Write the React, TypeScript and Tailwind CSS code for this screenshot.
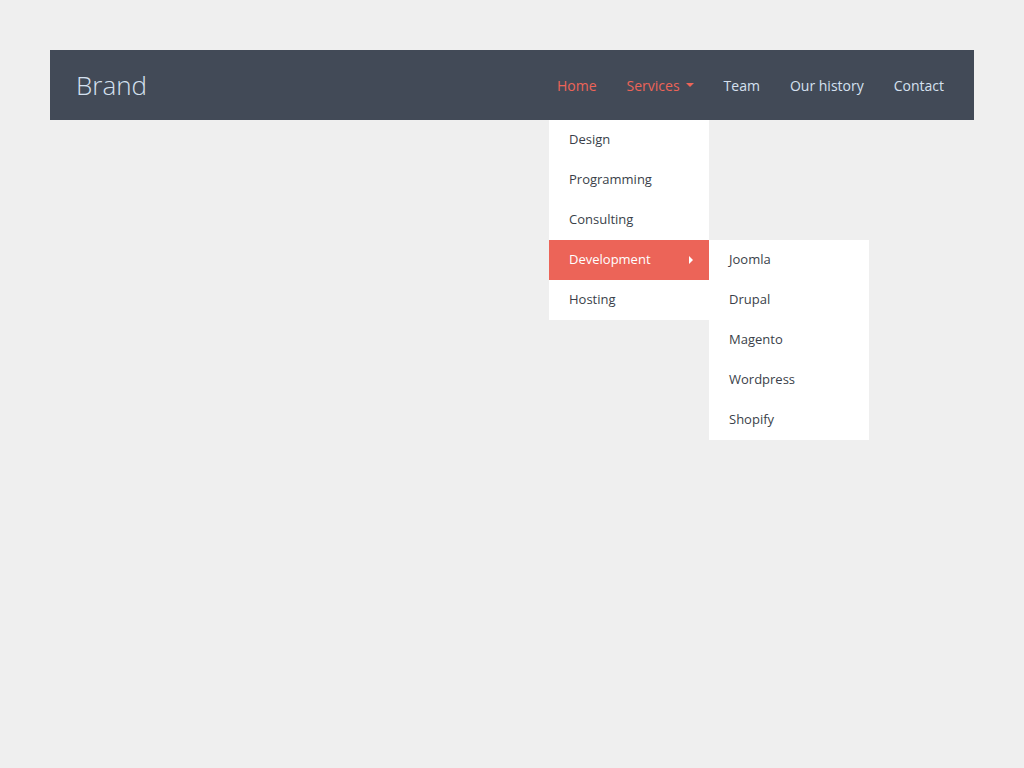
export default function App() {
  const f = { fontFamily: '"Open Sans", sans-serif' };
  const sub1 = ["Design", "Programming", "Consulting", "Development", "Hosting"];
  const sub2 = ["Joomla", "Drupal", "Magento", "Wordpress", "Shopify"];
  return (
    <div className="min-h-[768px] bg-[#efefef] pt-[50px] px-[50px]" style={f}>
      <div className="relative h-[70px] bg-[#424a57] flex items-center justify-between pl-[26px] pr-[15px]">
        <div className="text-[26px] font-light text-[#d5e1f0]">Brand</div>
        <ul className="flex text-[14px] text-[#d5e1f0]">
          <li className="px-[15px] text-[#ec6458]">Home</li>
          <li className="px-[15px] text-[#ec6458] flex items-center gap-[6px]">Services
            <span className="w-0 h-0 border-x-[4px] border-x-transparent border-t-[4px] border-t-[#ec6458]" /></li>
          <li className="px-[15px]">Team</li>
          <li className="px-[15px]">Our history</li>
          <li className="px-[15px]">Contact</li>
        </ul>
        <div className="absolute left-[499px] top-[70px] w-[160px] bg-white text-[13px]">
          {sub1.map((s) => (
            <div key={s} className={`relative h-[40px] flex items-center justify-between px-[20px] ${s === "Development" ? "bg-[#ec6458] text-white" : "text-[#3a3f4a]"}`}>
              {s}
              {s === "Development" && (
                <>
                  <span className="w-0 h-0 border-y-[4px] border-y-transparent border-l-[4px] border-l-white -mr-[4px]" />
                  <div className="absolute left-[160px] top-0 w-[160px] bg-white">
                    {sub2.map((t) => (
                      <div key={t} className="h-[40px] flex items-center px-[20px] text-[#3a3f4a]">{t}</div>
                    ))}
                  </div>
                </>
              )}
            </div>
          ))}
        </div>
      </div>
    </div>
  );
}
